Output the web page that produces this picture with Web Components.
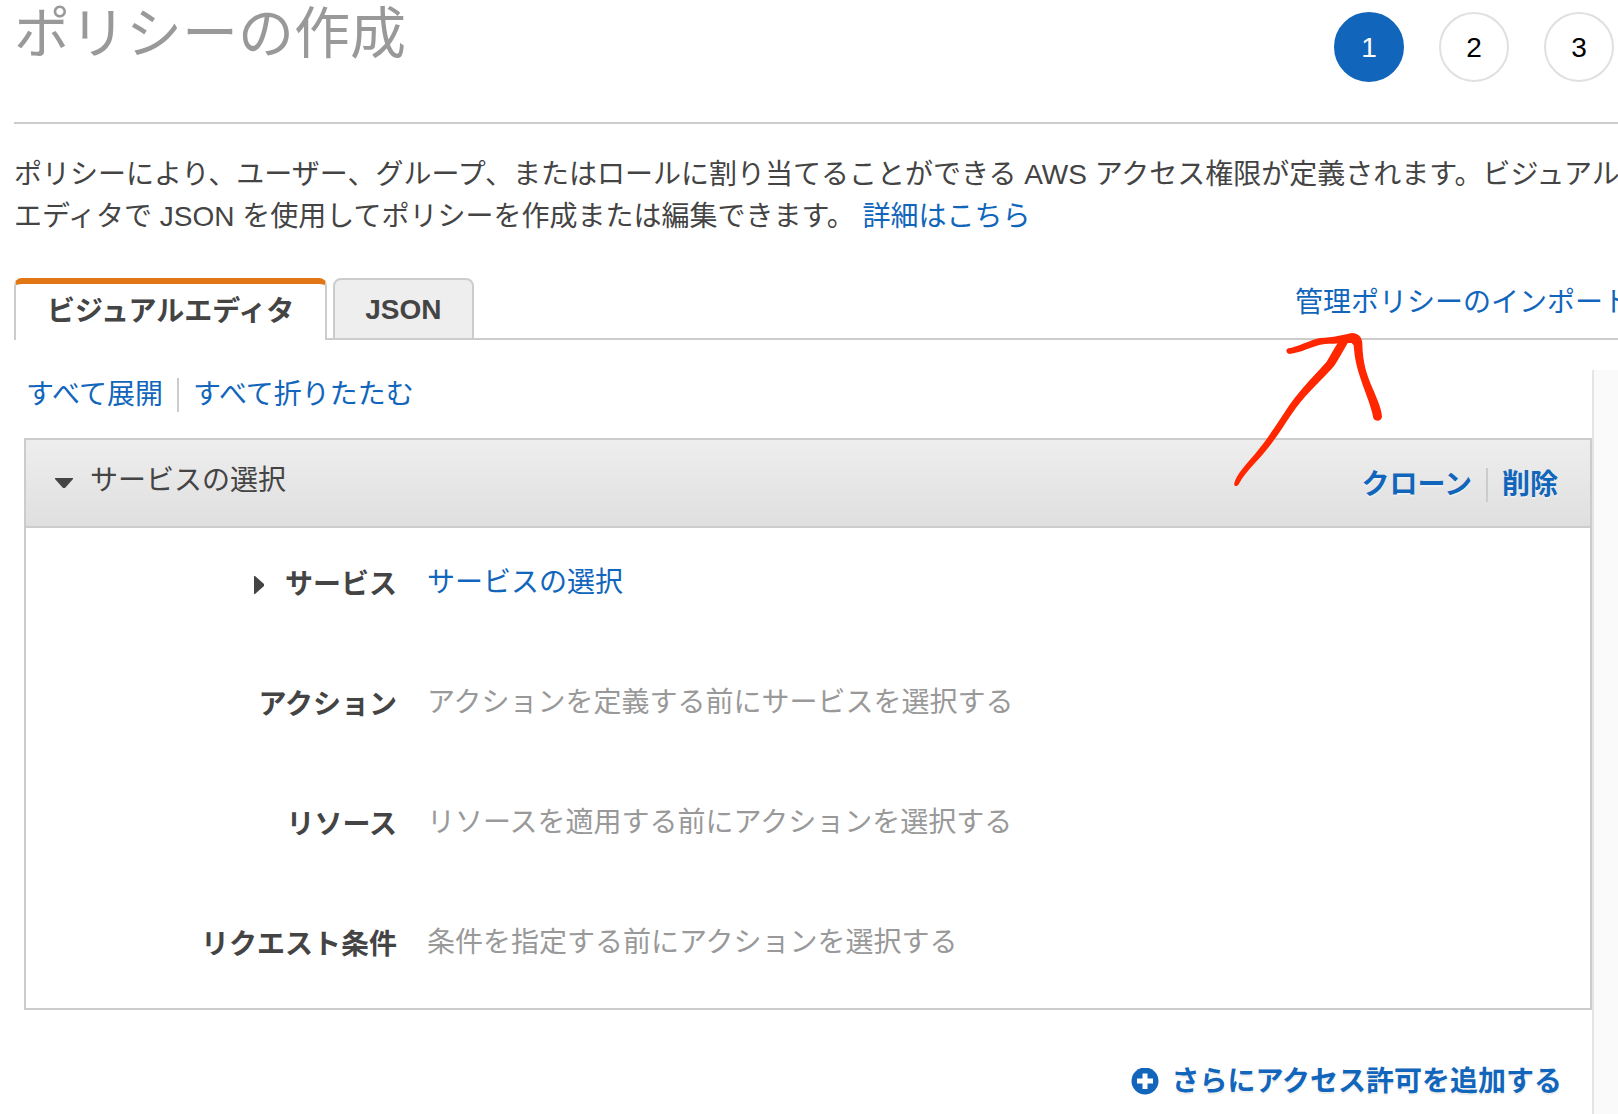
<!DOCTYPE html>
<html lang="ja">
<head>
<meta charset="utf-8">
<title>ポリシーの作成</title>
<style>
  body {
    margin: 0;
    overflow: hidden;
    background: #fff;
    color: #444;
    font: 28px/42px "Liberation Sans", "Noto Sans CJK JP", sans-serif;
  }
</style>
</head>
<body>

<template id="policy-page-tmpl">
  <style>
    :host {
      display: flex;
      flex-direction: column;
      position: relative;
      min-height: 100vh;
    }
    .intro {
      padding: 30px 0 0 14px;
      white-space: nowrap;
    }
    .tabs { padding: 40px 0 0 14px; }
    .main {
      flex: 1;
      display: flex;
      padding-top: 30px;
    }
    .editor {
      flex: 1;
      padding-left: 24px;
    }
    /* 右側のヘルプパネルの端 */
    .side {
      width: 24px;
      border-left: 2px solid #e5e5e5;
      background: #fafafa;
    }
  </style>
  <slot name="header"></slot>
  <div class="intro"><slot name="intro"></slot></div>
  <div class="tabs"><slot name="tabs"></slot></div>
  <div class="main">
    <div class="editor"><slot></slot></div>
    <div class="side"></div>
  </div>
  <slot name="note"></slot>
</template>

<template id="wizard-header-tmpl">
  <style>
    :host {
      display: flex;
      justify-content: space-between;
      height: 122px;
      margin-left: 14px;
      padding-right: 4px;
      border-bottom: 2px solid #ccc;
    }
    h1 {
      margin: 0;
      color: #999;
      font-size: 56px;
      line-height: 68px;
      font-weight: normal;
    }
    .steps {
      display: flex;
      gap: 35px;
      padding-top: 12px;
    }
  </style>
  <h1><slot></slot></h1>
  <div class="steps"><slot name="step"></slot></div>
</template>

<template id="wizard-step-tmpl">
  <style>
    :host {
      box-sizing: border-box;
      display: flex;
      align-items: center;
      justify-content: center;
      width: 70px;
      height: 70px;
      padding-top: 2px;
      border: 2px solid #e0e0e0;
      border-radius: 50%;
      color: #000;
    }
    :host([active]) {
      border-color: #1166bb;
      background: #1166bb;
      color: #fff;
    }
  </style>
  <slot></slot>
</template>

<template id="text-link-tmpl">
  <style>
    :host { display: inline-block; }
    a {
      display: flex;
      align-items: center;
      gap: 12px;
      color: #1166bb;
      text-decoration: none;
      white-space: nowrap;
    }
    :host([strong]) a {
      font-weight: bold;
      text-shadow: 0 2px 0 #eee;
    }
  </style>
  <a href="#"><slot name="icon"></slot><slot></slot></a>
</template>

<template id="link-group-tmpl">
  <style>
    :host {
      display: flex;
      align-items: center;
      height: 42px;
      line-height: 34px;
    }
    ::slotted(:not(:first-child)) {
      margin-left: 14px;
      padding-left: 14px;
      border-left: 2px solid #ccc;
    }
  </style>
  <slot></slot>
</template>

<template id="tab-bar-tmpl">
  <style>
    :host {
      display: flex;
      height: 62px;
    }
    .gap {
      width: 6px;
      border-bottom: 2px solid #ccc;
    }
    .rest {
      flex: 1;
      display: flex;
      justify-content: flex-end;
      border-bottom: 2px solid #ccc;
    }
    /* リンクは画面の右端からはみ出す */
    .rest ::slotted(*) {
      margin: 4px -13px 0 0;
    }
  </style>
  <slot name="current"></slot>
  <div class="gap"></div>
  <slot name="tab"></slot>
  <div class="rest"><slot></slot></div>
</template>

<template id="tab-item-tmpl">
  <style>
    :host { display: flex; }
    button {
      box-sizing: border-box;
      height: 62px;
      margin: 0;
      padding: 2px 30px 0;
      border: 2px solid #ccc;
      border-radius: 8px 8px 0 0;
      background: #eee;
      color: #444;
      font: inherit;
      font-weight: bold;
    }
    :host([selected]) button {
      padding: 0 31px;
      border-top: 6px solid #e07714;
      border-bottom: 0;
      background: #fff;
    }
  </style>
  <button type="button"><slot></slot></button>
</template>

<template id="permission-panel-tmpl">
  <style>
    :host {
      display: block;
      border: 2px solid #ccc;
      background: #fff;
    }
    .head {
      box-sizing: border-box;
      display: flex;
      align-items: center;
      height: 88px;
      padding: 4px 32px 0 28px;
      border-bottom: 2px solid #ccc;
      background: linear-gradient(#eee, #dfdfdf);
    }
    .title {
      flex: 1;
      display: flex;
      align-items: center;
      gap: 16px;
      padding-bottom: 8px;
    }
    svg {
      width: 20px;
      height: 12px;
      margin-top: 4px;
    }
  </style>
  <div class="head">
    <div class="title">
      <svg viewBox="0 0 20 12"><path d="M1 1h18v1l-8 9h-2l-8-9z" fill="#444"/></svg>
      <slot name="title"></slot>
    </div>
    <slot name="actions"></slot>
  </div>
  <slot></slot>
</template>

<template id="permission-row-tmpl">
  <style>
    :host {
      box-sizing: border-box;
      display: grid;
      grid-template-columns: 371px 1fr;
      column-gap: 30px;
      height: 120px;
      padding-top: 34px;
      color: #999;
    }
    .label {
      display: flex;
      align-items: center;
      justify-content: flex-end;
      gap: 20px;
      padding-top: 2px;
      color: #444;
      font-weight: bold;
    }
    .label, .value { height: 42px; }
    svg {
      display: none;
      width: 12px;
      height: 20px;
    }
    :host([expandable]) svg { display: block; }
  </style>
  <div class="label">
    <svg viewBox="0 0 12 20"><path d="M1 1h1l9 8v2l-9 8H1z" fill="#444"/></svg>
    <slot name="label"></slot>
  </div>
  <div class="value"><slot></slot></div>
</template>

<template id="arrow-note-tmpl">
  <style>
    :host {
      position: absolute;
      top: 330px;
      right: 228px;
      width: 160px;
      height: 160px;
      pointer-events: none;
    }
    svg { display: block; }
  </style>
  <svg width="160" height="160" viewBox="90 210 480 480" fill="#ff2600">
    <path d="M103 669C110 645 130 622 165 582C200 540 225 500 255 455C290 400 330 360 380 305C395 280 405 260 416 245L444 248C430 270 415 300 402 318C385 340 345 375 300 428C270 465 245 510 215 550C180 598 140 630 117 671C112 682 100 680 103 669z"/>
    <path d="M265 265C290 262 330 240 360 234C400 232 430 225 455 219C478 219 486 235 487 250C488 310 500 345 520 390C535 425 545 450 546 470C544 486 524 485 520 474C515 440 490 385 475 335C465 300 463 280 461 256L455 249L444 249C410 252 390 250 370 253C340 257 300 280 268 282C257 280 257 267 265 265z"/>
  </svg>
</template>

<script>
  // タグ名と同じ名前のテンプレートから要素を作る
  for (const name of [
    'policy-page',
    'wizard-header',
    'wizard-step',
    'text-link',
    'link-group',
    'tab-bar',
    'tab-item',
    'permission-panel',
    'permission-row',
    'arrow-note'
  ]) {
    customElements.define(
      name,
      class extends HTMLElement {
        connectedCallback() {
          if (this.shadowRoot) return;
          const tmpl = document.getElementById(name + '-tmpl');
          this.attachShadow({ mode: 'open' }).append(tmpl.content.cloneNode(true));
        }
      }
    );
  }
</script>

<style>
  .expand { padding: 4px 0 22px 2px; }
  .add {
    display: flex;
    justify-content: flex-end;
    padding: 51px 30px 0 0;
  }
</style>

<policy-page>
  <wizard-header slot="header">
    ポリシーの作成
    <wizard-step slot="step" active>1</wizard-step>
    <wizard-step slot="step">2</wizard-step>
    <wizard-step slot="step">3</wizard-step>
  </wizard-header>

  <div slot="intro">
    ポリシーにより、ユーザー、グループ、またはロールに割り当てることができる AWS アクセス権限が定義されます。ビジュアル<br>エディタで JSON を使用してポリシーを作成または編集できます。
    <text-link>詳細はこちら</text-link>
  </div>

  <tab-bar slot="tabs">
    <tab-item slot="current" selected>ビジュアルエディタ</tab-item>
    <tab-item slot="tab">JSON</tab-item>
    <text-link>管理ポリシーのインポート</text-link>
  </tab-bar>

  <link-group class="expand">
    <text-link>すべて展開</text-link>
    <text-link>すべて折りたたむ</text-link>
  </link-group>

  <permission-panel>
    <span slot="title">サービスの選択</span>
    <link-group slot="actions">
      <text-link strong>クローン</text-link>
      <text-link strong>削除</text-link>
    </link-group>

    <permission-row expandable>
      <span slot="label">サービス</span>
      <text-link>サービスの選択</text-link>
    </permission-row>
    <permission-row>
      <span slot="label">アクション</span>
      アクションを定義する前にサービスを選択する
    </permission-row>
    <permission-row>
      <span slot="label">リソース</span>
      リソースを適用する前にアクションを選択する
    </permission-row>
    <permission-row>
      <span slot="label">リクエスト条件</span>
      条件を指定する前にアクションを選択する
    </permission-row>
  </permission-panel>

  <div class="add">
    <text-link strong>
      <svg slot="icon" width="28" height="28" viewBox="0 0 28 28">
        <circle cx="14" cy="13" r="13.5" fill="#1166bb"/>
        <path d="M11.5 5.500h5v5h5.500v5h-5.500v5.500h-5v-5.500h-5.500v-5h5.500z" fill="#fff"/>
      </svg>
      さらにアクセス許可を追加する
    </text-link>
  </div>

  <arrow-note slot="note"></arrow-note>
</policy-page>

</body>
</html>
